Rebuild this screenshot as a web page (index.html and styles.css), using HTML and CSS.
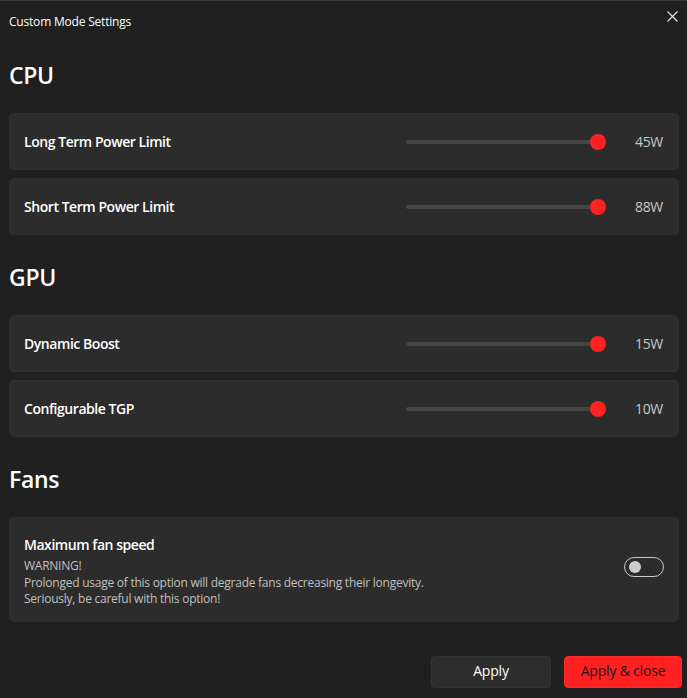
FILE: index.html
```html
<!DOCTYPE html>
<html>
<head>
<meta charset="utf-8">
<link rel="stylesheet" href="styles.css">
</head>
<body>
<div class="window">
  <header class="titlebar">
    <span class="title">Custom Mode Settings</span>
    <svg class="close" width="11" height="11" viewBox="0 0 11 11"><path d="M0.5 0.5 L10.5 10.5 M10.5 0.5 L0.5 10.5" stroke="#e6e6e6" stroke-width="1.1" fill="none"/></svg>
  </header>

  <main class="content">
    <section class="group">
      <h2 class="heading">CPU</h2>
      <div class="card row">
        <span class="label">Long Term Power Limit</span>
        <div class="slider"><div class="track"></div><div class="thumb"></div></div>
        <span class="value">45W</span>
      </div>
      <div class="card row">
        <span class="label">Short Term Power Limit</span>
        <div class="slider"><div class="track"></div><div class="thumb"></div></div>
        <span class="value">88W</span>
      </div>
    </section>

    <section class="group">
      <h2 class="heading">GPU</h2>
      <div class="card row">
        <span class="label">Dynamic Boost</span>
        <div class="slider"><div class="track"></div><div class="thumb"></div></div>
        <span class="value">15W</span>
      </div>
      <div class="card row">
        <span class="label">Configurable TGP</span>
        <div class="slider"><div class="track"></div><div class="thumb"></div></div>
        <span class="value">10W</span>
      </div>
    </section>

    <section class="group">
      <h2 class="heading">Fans</h2>
      <div class="card fan">
        <div class="fan-text">
          <div class="label">Maximum fan speed</div>
          <div class="desc">WARNING!<br>Prolonged usage of this option will degrade fans decreasing their longevity.<br>Seriously, be careful with this option!</div>
        </div>
        <div class="toggle"><div class="knob"></div></div>
      </div>
    </section>
  </main>

  <footer class="actions">
    <button class="btn btn-secondary">Apply</button>
    <button class="btn btn-primary">Apply &amp; close</button>
  </footer>
</div>
</body>
</html>
```

FILE: styles.css
```css
* { box-sizing: border-box; }
html, body {
  margin: 0;
  padding: 0;
  background: #202020;
}
body {
  font-family: "Open Sans", "Noto Sans", sans-serif;
  color: #ffffff;
  width: 687px;
  height: 698px;
  overflow: hidden;
  border-top: 1px solid #3a3a3a;
}
.window {
  display: flex;
  flex-direction: column;
  height: 697px;
}
.titlebar {
  height: 41px;
  display: flex;
  align-items: center;
  justify-content: space-between;
  padding: 0 9px 0 9px;
}
.title {
  font-size: 12px;
  color: #ffffff;
  letter-spacing: -0.2px;
  margin-top: 0;
}
.close {
  margin-top: -10px;
}
.content {
  padding: 0 8px 0 9px;
}
.group {
  display: flex;
  flex-direction: column;
  gap: 8px;
  margin-top: 13px;
}
.group + .group { margin-top: 22px; }
.heading {
  margin: 0 0 10px 0;
  height: 40px;
  line-height: 40px;
  font-size: 23px;
  font-weight: 600;
  letter-spacing: -0.3px;
}
.card {
  background: #2c2c2c;
  border: 1px solid #303030;
  border-radius: 5px;
}
.row {
  height: 57px;
  display: flex;
  align-items: center;
  padding: 0 15px 0 14px;
}
.label {
  font-size: 14px;
  font-weight: 600;
  letter-spacing: -0.45px;
  flex: 1;
}
.slider {
  position: relative;
  width: 200px;
  height: 16px;
  display: flex;
  align-items: center;
}
.track {
  width: 194px;
  height: 4px;
  border-radius: 2px;
  background: #454545;
}
.thumb {
  position: absolute;
  left: 184px;
  top: 0;
  width: 16px;
  height: 16px;
  border-radius: 50%;
  background: #ff2020;
}
.value {
  width: 57px;
  text-align: right;
  font-size: 14px;
  color: #c8c8c8;
  letter-spacing: -0.3px;
}
.fan {
  display: flex;
  align-items: center;
  padding: 17px 14px 13px 14px;
}
.fan-text { flex: 1; }
.fan .label {
  line-height: 20px;
  margin-bottom: 3px;
}
.desc {
  font-size: 12px;
  line-height: 16.5px;
  color: #c0c0c0;
  letter-spacing: -0.25px;
}
.toggle {
  width: 40px;
  height: 20px;
  border: 1px solid #c8c8c8;
  border-radius: 10px;
  display: flex;
  align-items: center;
  padding-left: 4px;
  margin-right: 0;
  margin-top: -9px;
}
.knob {
  width: 12px;
  height: 12px;
  border-radius: 50%;
  background: #cccccc;
}
.actions {
  margin-top: auto;
  display: flex;
  justify-content: flex-end;
  gap: 13px;
  padding: 0 5px 10px 0;
}
.btn {
  height: 32px;
  border-radius: 4px;
  font-family: "Open Sans", "Noto Sans", sans-serif;
  font-size: 14px;
  letter-spacing: -0.2px;
  line-height: 1;
  padding: 0 0 2px 0;
}
.btn-secondary {
  width: 120px;
  background: #2d2d2d;
  border: 1px solid #333333;
  color: #ffffff;
}
.btn-primary {
  width: 118px;
  background: #ff2121;
  border: 1px solid #ff2a2a;
  color: #1b1b1b;
}
```
